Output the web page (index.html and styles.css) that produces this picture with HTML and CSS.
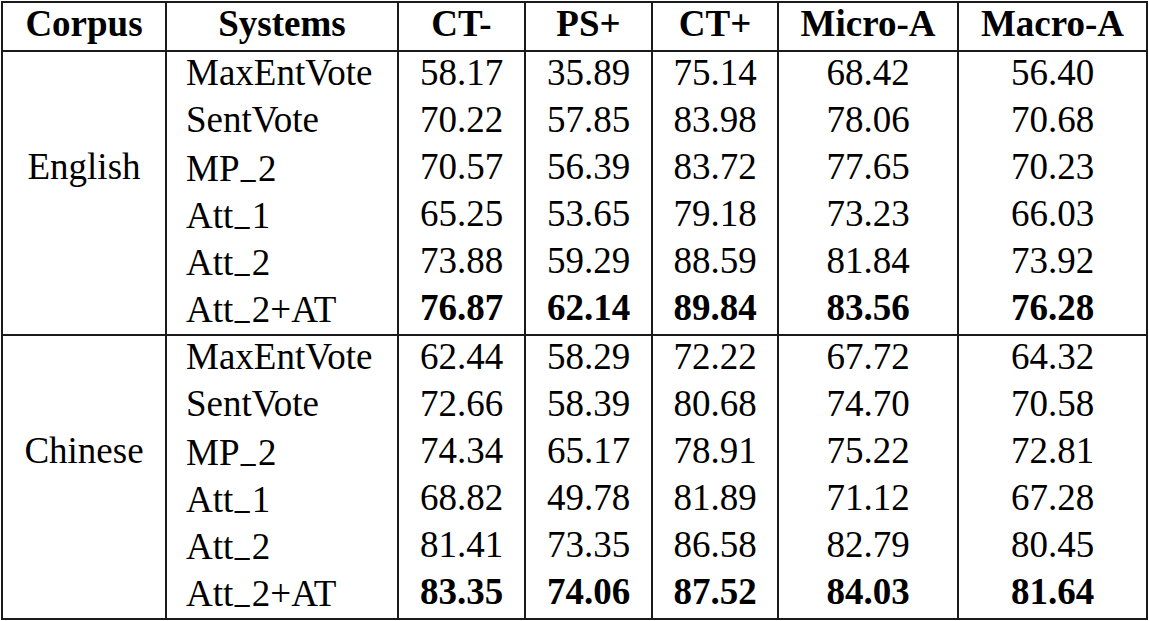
FILE: index.html
```html
<!DOCTYPE html>
<html>
<head>
<meta charset="utf-8">
<link rel="stylesheet" href="styles.css">
</head>
<body>
<table class="results">
  <colgroup>
    <col class="c-corpus">
    <col class="c-sys">
    <col class="c-num">
    <col class="c-num">
    <col class="c-num2">
    <col class="c-micro">
    <col class="c-macro">
  </colgroup>
  <thead>
    <tr>
      <th>Corpus</th><th>Systems</th><th>CT-</th><th>PS+</th><th>CT+</th><th>Micro-A</th><th>Macro-A</th>
    </tr>
  </thead>
  <tbody>
    <tr><td class="corpus"></td><td class="sys">MaxEntVote</td><td>58.17</td><td>35.89</td><td>75.14</td><td>68.42</td><td>56.40</td></tr>
    <tr><td class="corpus"></td><td class="sys">SentVote</td><td>70.22</td><td>57.85</td><td>83.98</td><td>78.06</td><td>70.68</td></tr>
    <tr><td class="corpus">English</td><td class="sys">MP<span class="us">_</span>2</td><td>70.57</td><td>56.39</td><td>83.72</td><td>77.65</td><td>70.23</td></tr>
    <tr><td class="corpus"></td><td class="sys">Att<span class="us">_</span>1</td><td>65.25</td><td>53.65</td><td>79.18</td><td>73.23</td><td>66.03</td></tr>
    <tr><td class="corpus"></td><td class="sys">Att<span class="us">_</span>2</td><td>73.88</td><td>59.29</td><td>88.59</td><td>81.84</td><td>73.92</td></tr>
    <tr class="last"><td class="corpus"></td><td class="sys">Att<span class="us">_</span>2+AT</td><td class="b">76.87</td><td class="b">62.14</td><td class="b">89.84</td><td class="b">83.56</td><td class="b">76.28</td></tr>
  </tbody>
  <tbody>
    <tr><td class="corpus"></td><td class="sys">MaxEntVote</td><td>62.44</td><td>58.29</td><td>72.22</td><td>67.72</td><td>64.32</td></tr>
    <tr><td class="corpus"></td><td class="sys">SentVote</td><td>72.66</td><td>58.39</td><td>80.68</td><td>74.70</td><td>70.58</td></tr>
    <tr><td class="corpus">Chinese</td><td class="sys">MP<span class="us">_</span>2</td><td>74.34</td><td>65.17</td><td>78.91</td><td>75.22</td><td>72.81</td></tr>
    <tr><td class="corpus"></td><td class="sys">Att<span class="us">_</span>1</td><td>68.82</td><td>49.78</td><td>81.89</td><td>71.12</td><td>67.28</td></tr>
    <tr><td class="corpus"></td><td class="sys">Att<span class="us">_</span>2</td><td>81.41</td><td>73.35</td><td>86.58</td><td>82.79</td><td>80.45</td></tr>
    <tr class="last"><td class="corpus"></td><td class="sys">Att<span class="us">_</span>2+AT</td><td class="b">83.35</td><td class="b">74.06</td><td class="b">87.52</td><td class="b">84.03</td><td class="b">81.64</td></tr>
  </tbody>
</table>
</body>
</html>
```
FILE: styles.css
```css
html, body {
  margin: 0;
  padding: 0;
  background: #fff;
}

body {
  padding: 1px 0 0 1px;
  font-family: "Liberation Serif", "Times New Roman", serif;
  color: #000;
}

.results {
  border-collapse: collapse;
  table-layout: fixed;
  width: 1145px;
  font-size: 37px;
  line-height: 1;
}

.c-corpus { width: 164px; }
.c-sys { width: 232px; }
.c-num { width: 127px; }
.c-num2 { width: 126px; }
.c-micro { width: 180px; }
.c-macro { width: 189px; }

.results th,
.results td {
  border-left: 2px solid #1a1a1a;
  border-right: 2px solid #1a1a1a;
  padding: 0 0 6px 0;
  text-align: center;
  vertical-align: middle;
  white-space: nowrap;
}

.results th {
  height: 41px;
  font-weight: bold;
  border-top: 2px solid #1a1a1a;
  border-bottom: 2px solid #1a1a1a;
}

.results td {
  height: 41px;
}

.results tr.last td {
  border-bottom: 2px solid #1a1a1a;
}

.results td.sys {
  text-align: left;
  padding-left: 19px;
}

.results td.b {
  font-weight: bold;
}

.us {
  display: inline-block;
  vertical-align: 0.1em;
  transform: scaleX(0.8);
}
```
